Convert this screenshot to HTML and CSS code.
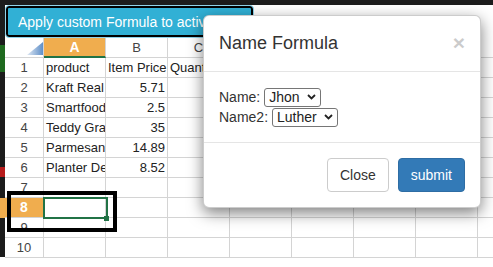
FILE: index.html
```html
<!DOCTYPE html>
<html>
<head>
<meta charset="utf-8">
<link rel="stylesheet" href="styles.css">
</head>
<body>
<div class="page">
  <div class="side"></div>
  <div class="main">
    <div class="topbar"></div>
    <div class="toolbar"><button class="btn-apply">Apply custom Formula to active cell</button></div>
    <div class="sheet">
      <div class="c corner"></div><div class="c ch hl">A</div><div class="c ch">B</div><div class="c ch">C</div><div class="c ch">D</div><div class="c ch">E</div><div class="c ch">F</div><div class="c ch">G</div><div class="c ch">H</div>
      <div class="c rh">1</div><div class="c">product</div><div class="c">Item Price</div><div class="c">Quantity</div><div class="c"></div><div class="c"></div><div class="c"></div><div class="c"></div><div class="c"></div>
      <div class="c rh">2</div><div class="c">Kraft Real Mayo</div><div class="c num">5.71</div><div class="c"></div><div class="c"></div><div class="c"></div><div class="c"></div><div class="c"></div><div class="c"></div>
      <div class="c rh">3</div><div class="c">Smartfood Popcorn</div><div class="c num">2.5</div><div class="c"></div><div class="c"></div><div class="c"></div><div class="c"></div><div class="c"></div><div class="c"></div>
      <div class="c rh">4</div><div class="c">Teddy Grahams</div><div class="c num">35</div><div class="c"></div><div class="c"></div><div class="c"></div><div class="c"></div><div class="c"></div><div class="c"></div>
      <div class="c rh">5</div><div class="c">Parmesan Cheese</div><div class="c num">14.89</div><div class="c"></div><div class="c"></div><div class="c"></div><div class="c"></div><div class="c"></div><div class="c"></div>
      <div class="c rh">6</div><div class="c">Planter Deluxe</div><div class="c num">8.52</div><div class="c"></div><div class="c"></div><div class="c"></div><div class="c"></div><div class="c"></div><div class="c"></div>
      <div class="c rh">7</div><div class="c"></div><div class="c"></div><div class="c"></div><div class="c"></div><div class="c"></div><div class="c"></div><div class="c"></div><div class="c"></div>
      <div class="c rh hl">8</div><div class="c"></div><div class="c"></div><div class="c"></div><div class="c"></div><div class="c"></div><div class="c"></div><div class="c"></div><div class="c"></div>
      <div class="c rh">9</div><div class="c"></div><div class="c"></div><div class="c"></div><div class="c"></div><div class="c"></div><div class="c"></div><div class="c"></div><div class="c"></div>
      <div class="c rh">10</div><div class="c"></div><div class="c"></div><div class="c"></div><div class="c"></div><div class="c"></div><div class="c"></div><div class="c"></div><div class="c"></div>
    </div>
  </div>

  <div class="frame"></div>
  <div class="selection"></div>
  <div class="handle"></div>

  <div class="modal">
    <div class="modal-header">
      <span class="close">×</span>
      <h4 class="modal-title">Name Formula</h4>
    </div>
    <div class="modal-body">
      <div class="field">Name: <span class="select">Jhon<svg width="9" height="6" viewBox="0 0 9 6"><polyline points="1,1 4.5,4.5 8,1" fill="none" stroke="#222" stroke-width="1.8"/></svg></span></div>
      <div class="field">Name2: <span class="select">Luther<svg width="9" height="6" viewBox="0 0 9 6"><polyline points="1,1 4.5,4.5 8,1" fill="none" stroke="#222" stroke-width="1.8"/></svg></span></div>
    </div>
    <div class="modal-footer">
      <button class="btn btn-default">Close</button>
      <button class="btn btn-primary">submit</button>
    </div>
  </div>
</div>
</body>
</html>
```
FILE: styles.css
```css
html, body {
  margin: 0;
  padding: 0;
  background: #fff;
}
body {
  font-family: "Liberation Sans", Arial, sans-serif;
  color: #333;
  width: 493px;
  height: 267px;
  overflow: hidden;
}
.page {
  position: relative;
  display: flex;
  width: 493px;
  height: 267px;
  overflow: hidden;
}
.side {
  width: 5px;
  height: 257px;
  flex: none;
  background: linear-gradient(to bottom,
    #1c1c1c 0 45px, #1f6a1f 45px 72px, #1c1c1c 72px 167px,
    #b71c1c 167px 177px, #1c1c1c 177px 198px,
    #f0ad4e 198px 218px, #1c1c1c 218px 257px);
}
.main {
  flex: 1;
  min-width: 0;
  overflow: hidden;
}
.topbar {
  height: 5px;
  background: #1c1c1c;
}
.toolbar {
  height: 33px;
}
.btn-apply {
  display: block;
  box-sizing: border-box;
  width: 249px;
  height: 33px;
  margin: 0;
  padding: 0 12px;
  text-align: left;
  white-space: nowrap;
  overflow: hidden;
  font-family: "Liberation Sans", Arial, sans-serif;
  font-size: 14px;
  color: #fff;
  background: #31b0d5;
  border: 1px solid #8fd3ea;
  border-radius: 4px;
  box-shadow: inset 0 0 0 2px #000;
}
.sheet {
  display: grid;
  grid-template-columns: 39px repeat(8, 62px);
  grid-auto-rows: 20px;
  width: 535px;
  font-size: 13px;
  color: #222;
}
.c {
  position: relative;
  box-sizing: border-box;
  border-right: 1px solid #d4d4d4;
  border-bottom: 1px solid #d4d4d4;
  padding: 0 2px 0 2px;
  line-height: 19px;
  white-space: nowrap;
  overflow: hidden;
}
.num {
  text-align: right;
}
.ch, .rh {
  text-align: center;
  color: #444;
  padding: 0;
}
.ch.hl, .rh.hl {
  background: #f0ad4e;
  color: #fff;
  font-weight: bold;
  font-size: 14px;
}
.ch.hl {
  border-bottom: 2px solid #217346;
  line-height: 18px;
}
.corner::after {
  content: "";
  position: absolute;
  right: 0;
  bottom: 2px;
  width: 16px;
  height: 13px;
  clip-path: polygon(100% 0, 100% 100%, 0 100%);
  background: linear-gradient(to right, #dfe8f3, #5f8fc8);
}
.frame {
  position: absolute;
  left: 7px;
  top: 191px;
  width: 110px;
  height: 41px;
  box-sizing: border-box;
  border: 4px solid #000;
}
.selection {
  position: absolute;
  left: 43px;
  top: 197px;
  width: 65px;
  height: 22px;
  box-sizing: border-box;
  border: 2px solid #217346;
}
.handle {
  position: absolute;
  left: 104px;
  top: 216px;
  width: 5px;
  height: 5px;
  background: #217346;
}
.modal {
  position: absolute;
  left: 203px;
  top: 15px;
  width: 278px;
  box-sizing: border-box;
  background: #fff;
  border: 1px solid rgba(0, 0, 0, 0.2);
  border-radius: 6px;
  box-shadow: 0 5px 15px rgba(0, 0, 0, 0.5);
  font-size: 14px;
  line-height: 20px;
  color: #333;
}
.modal-header {
  padding: 15px;
  border-bottom: 1px solid #e5e5e5;
}
.modal-title {
  margin: 0;
  font-size: 18px;
  font-weight: normal;
  line-height: 25px;
}
.close {
  float: right;
  font-size: 21px;
  font-weight: bold;
  line-height: 1;
  color: #000;
  opacity: 0.2;
  margin-top: 1px;
}
.modal-body {
  padding: 15px;
}
.field {
  display: flex;
  align-items: center;
  gap: 4px;
  height: 20px;
}
.select {
  display: inline-flex;
  align-items: center;
  gap: 7px;
  box-sizing: border-box;
  height: 19px;
  padding: 0 4px;
  border: 1px solid #767676;
  border-radius: 3px;
  color: #222;
}
.modal-footer {
  display: flex;
  justify-content: flex-end;
  gap: 9px;
  padding: 15px;
  border-top: 1px solid #e5e5e5;
}
.btn {
  margin: 0;
  padding: 6px 12px;
  font-family: "Liberation Sans", Arial, sans-serif;
  font-size: 14px;
  line-height: 20px;
  border: 1px solid transparent;
  border-radius: 4px;
}
.btn-default {
  background: #fff;
  border-color: #ccc;
  color: #333;
}
.btn-primary {
  background: #337ab7;
  border-color: #2e6da4;
  color: #fff;
}
```
